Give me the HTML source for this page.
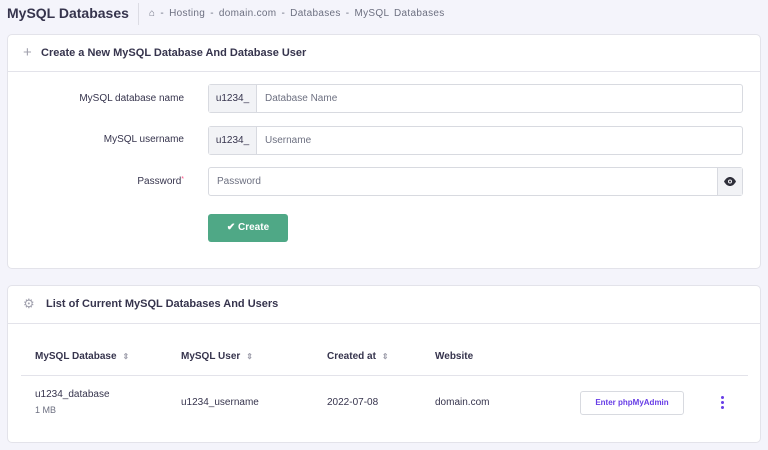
<!DOCTYPE html><html><head><style>
body{margin:0;width:768px;height:450px;background:#f4f4fb;font-family:"Liberation Sans",sans-serif;color:#2f1c6a;position:relative;overflow:hidden}
.a{position:absolute}
.card{position:absolute;left:7px;width:752px;background:#fff;border:1px solid #e3e3ea;border-radius:5px}
.lbl{position:absolute;right:584px;font-size:10px;color:#36344d;text-align:right}
.inp{position:absolute;left:208px;width:533px;height:27px;border:1px solid #d8dae0;border-radius:3px;background:#fff;font-size:10px;color:#6d7081}
.pre{position:absolute;left:0;top:0;width:47px;height:27px;background:#f2f3f6;border-right:1px solid #d8dae0;line-height:27px;text-align:center;color:#36344d}
.ph{position:absolute;top:0;line-height:27px}
.th{position:absolute;top:351px;font-size:10px;font-weight:bold;color:#36344d}
.td{position:absolute;font-size:10px;color:#36344d}
.s{color:#a0a0ad;font-size:8px;margin-left:6px}
</style></head><body>
<div class="a" style="left:7px;top:5px;font-size:14px;font-weight:bold;color:#36344d">MySQL Databases</div>
<div class="a" style="left:138px;top:3px;width:1px;height:22px;background:#dcdce4"></div>
<div class="a" style="left:149px;top:8px;font-size:10px;color:#6d7081;letter-spacing:0.3px;word-spacing:2px"><span style="color:#6d7081">&#8962;</span> - Hosting - domain.com - Databases - MySQL Databases</div>
<div class="card" style="top:34px;height:233px">
<div class="a" style="left:0;top:36px;width:752px;height:1px;background:#e3e3ea"></div>
<div class="a" style="left:15px;top:9px;font-size:15px;color:#a0a0ad">+</div>
<div class="a" style="left:33px;top:12px;font-size:11px;font-weight:bold;color:#36344d">Create a New MySQL Database And Database User</div>
</div>
<div class="lbl" style="top:93px">MySQL database name</div>
<div class="lbl" style="top:134px">MySQL username</div>
<div class="lbl" style="top:176px">Password<span style="color:#fc5185;font-size:7px;vertical-align:top">*</span></div>
<div class="inp" style="top:84px"><div class="pre">u1234_</div><div class="ph" style="left:56px">Database Name</div></div>
<div class="inp" style="top:126px"><div class="pre">u1234_</div><div class="ph" style="left:56px">Username</div></div>
<div class="inp" style="top:167px"><div class="ph" style="left:8px">Password</div><div class="a" style="right:0;top:0;width:24px;height:27px;background:#f2f3f6;border-left:1px solid #d8dae0"><svg class="a" style="left:6px;top:9px" width="12" height="9" viewBox="0 0 12 9"><path d="M0 4.5C2 1 4 0 6 0s4 1 6 4.5C10 8 8 9 6 9S2 8 0 4.5z" fill="#2f2f3a"/><circle cx="6" cy="4.5" r="2" fill="#f2f3f6"/><circle cx="6" cy="4.5" r="1" fill="#2f2f3a"/></svg></div></div>
<div class="a" style="left:208px;top:214px;width:80px;height:28px;background:#4fa886;border-radius:3px;color:#fff;font-size:10px;font-weight:bold;line-height:28px;text-align:center">&#10004; Create</div>
<div class="card" style="top:285px;height:156px">
<div class="a" style="left:0;top:37px;width:752px;height:1px;background:#e3e3ea"></div>
<div class="a" style="left:15px;top:10px;font-size:13px;color:#a0a0ad">&#9881;</div>
<div class="a" style="left:38px;top:12px;font-size:11px;font-weight:bold;color:#36344d">List of Current MySQL Databases And Users</div>
<div class="a" style="left:13px;top:89px;width:727px;height:1px;background:#e3e3ea"></div>
</div>
<div class="th" style="left:35px">MySQL Database<span class="s">&#8661;</span></div>
<div class="th" style="left:181px">MySQL User<span class="s">&#8661;</span></div>
<div class="th" style="left:327px">Created at<span class="s">&#8661;</span></div>
<div class="th" style="left:435px">Website</div>
<div class="td" style="left:35px;top:389px">u1234_database</div>
<div class="td" style="left:35px;top:405px;font-size:9px;color:#6d7081">1 MB</div>
<div class="td" style="left:181px;top:397px">u1234_username</div>
<div class="td" style="left:327px;top:397px">2022-07-08</div>
<div class="td" style="left:435px;top:397px">domain.com</div>
<div class="a" style="left:580px;top:391px;width:102px;height:22px;border:1px solid #d8dae0;border-radius:3px;font-size:8px;font-weight:bold;color:#673de6;text-align:center;line-height:22px">Enter phpMyAdmin</div>
<div class="a" style="left:721px;top:396px;width:3px">
<div style="width:3px;height:3px;border-radius:50%;background:#673de6;margin-bottom:2px"></div><div style="width:3px;height:3px;border-radius:50%;background:#673de6;margin-bottom:2px"></div><div style="width:3px;height:3px;border-radius:50%;background:#673de6"></div></div>
</body></html>
